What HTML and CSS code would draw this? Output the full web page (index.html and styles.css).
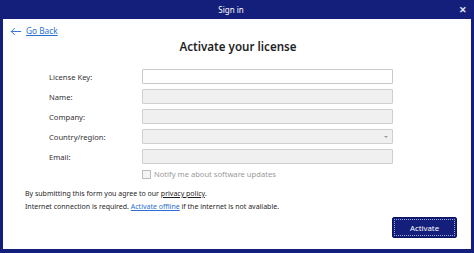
FILE: index.html
```html
<!DOCTYPE html>
<html lang="en">
<head>
    <meta charset="UTF-8">
    <title>Sign in</title>
    <link rel="stylesheet" href="styles.css">
</head>
<body>
    <div class="window">
        <div class="title-bar">
            <span class="title">Sign in</span>
            <span class="close-btn">&#x2715;</span>
        </div>

        <div class="content">
            <a class="back-link" href="#">
                <svg class="back-arrow" viewBox="0 0 14 10" width="12" height="9">
                    <path d="M13 5H1.5M5.5 1L1.5 5l4 4" fill="none" stroke="currentColor" stroke-width="1.1"/>
                </svg>
                <span>Go Back</span>
            </a>

            <h1>Activate your license</h1>

            <div class="form">
                <label class="field-label">License Key:</label>
                <div class="field"><input class="text-input" type="text"></div>

                <label class="field-label">Name:</label>
                <div class="field"><input class="text-input disabled" type="text" disabled></div>

                <label class="field-label">Company:</label>
                <div class="field"><input class="text-input disabled" type="text" disabled></div>

                <label class="field-label">Country/region:</label>
                <div class="field">
                    <div class="text-input disabled select">
                        <span class="select-arrow"></span>
                    </div>
                </div>

                <label class="field-label">Email:</label>
                <div class="field"><input class="text-input disabled" type="text" disabled></div>

                <span></span>
                <div class="notify">
                    <span class="checkbox"></span>
                    <span>Notify me about software updates</span>
                </div>
            </div>

            <div class="notes">
                <p>By submitting this form you agree to our <a class="policy-link" href="#">privacy policy</a>.</p>
                <p>Internet connection is required. <a class="offline-link" href="#">Activate offline</a> if the internet is not available.</p>
            </div>

            <div class="actions">
                <button class="activate-btn">Activate</button>
            </div>
        </div>
    </div>
</body>
</html>
```

FILE: styles.css
```css
:root {
    --navy: #141f7c;
    --link: #2a6fd0;
    --text: #1f1f1f;
    --muted: #9a9a9a;
    --border: #c9c9c9;
}

* {
    margin: 0;
    padding: 0;
    box-sizing: border-box;
}

body {
    background: var(--navy);
    font-family: 'Noto Sans', sans-serif;
    color: var(--text);
    width: 474px;
    height: 253px;
    overflow: hidden;
}

.window {
    display: flex;
    flex-direction: column;
    height: 253px;
}

.title-bar {
    height: 19px;
    display: flex;
    align-items: center;
    justify-content: center;
    position: relative;
    color: #fff;
}

.title {
    font-size: 8px;
    margin-left: -12px;
}

.close-btn {
    position: absolute;
    right: 7px;
    top: 3px;
    font-size: 9px;
    font-weight: 700;
    color: #e8e8f2;
}

.content {
    flex: 1;
    background: #fff;
    margin: 0 3px 4px 3px;
    padding: 6px 7px 0 7px;
    display: flex;
    flex-direction: column;
}

.back-link {
    display: flex;
    align-items: center;
    gap: 4px;
    color: var(--link);
    font-size: 8.3px;
    text-decoration: none;
    width: max-content;
}

.back-link span {
    text-decoration: underline;
}

.back-arrow {
    margin-top: 1px;
}

h1 {
    text-align: center;
    font-size: 11.6px;
    font-weight: 600;
    margin-top: 3px;
    margin-left: 2px;
}

.form {
    display: grid;
    grid-template-columns: 93px 251px;
    row-gap: 5px;
    margin: 15px 0 0 39px;
    align-items: center;
    font-size: 7.6px;
}

.field-label {
    color: #333;
}

.text-input {
    display: block;
    width: 100%;
    height: 15px;
    border: 1px solid var(--border);
    border-radius: 1px;
    background: #fff;
}

.text-input.disabled {
    background: #f0f0f0;
    border-color: #cfcfcf;
}

.select {
    display: flex;
    align-items: center;
    justify-content: flex-end;
    padding-right: 4px;
}

.select-arrow {
    width: 0;
    height: 0;
    border-left: 2px solid transparent;
    border-right: 2px solid transparent;
    border-top: 2px solid #999;
}

.notify {
    display: flex;
    align-items: center;
    gap: 3px;
    color: var(--muted);
    margin-top: 0;
}

.checkbox {
    width: 9px;
    height: 9px;
    border: 1px solid #bdbdbd;
    background: #f4f4f4;
}

.notes {
    margin: 8px 0 0 15px;
    font-size: 7px;
    line-height: 13px;
}

.policy-link {
    color: var(--text);
}

.offline-link {
    color: var(--link);
}

.actions {
    display: flex;
    justify-content: flex-end;
    margin-top: 4px;
    padding-right: 7px;
}

.activate-btn {
    width: 65px;
    height: 21px;
    background: var(--navy);
    color: #fff;
    border: 1px solid #0c1560;
    outline: 1px dotted #9aa3d8;
    outline-offset: -3px;
    border-radius: 2px;
    font-family: inherit;
    font-size: 7.8px;
}
```
